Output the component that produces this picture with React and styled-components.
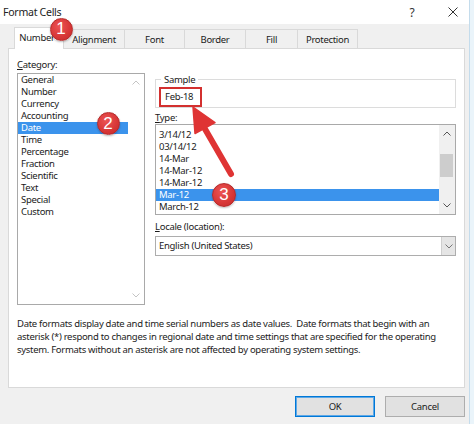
import styled, { createGlobalStyle } from "styled-components";

const GlobalStyle = createGlobalStyle`
  html, body {
    margin: 0;
    padding: 0;
    background: #eaf4fa;
  }
  * {
    box-sizing: border-box;
  }
`;

const Window = styled.div`
  position: relative;
  width: 470px;
  height: 424px;
  display: flex;
  flex-direction: column;
  background: #f0f0f0;
  border-right: 1px solid #c4dcec;
  font-family: "Noto Sans", "Liberation Sans", sans-serif;
  font-size: 9.5px;
  letter-spacing: -0.3px;
  color: #1b1b1b;
  overflow: hidden;
`;

const TitleBar = styled.div`
  height: 24px;
  flex: none;
  display: flex;
  align-items: center;
  padding-left: 3px;
  background: #fff;
`;

const Title = styled.div`
  flex: 1;
  font-size: 10.6px;
  color: #222;
`;

const TitleButton = styled.div`
  width: ${(p) => p.$w}px;
  height: 24px;
  margin-left: ${(p) => p.$gap || 0}px;
  display: flex;
  align-items: center;
  justify-content: center;
  font-size: 12px;
  color: #333;
`;

const Body = styled.div`
  flex: 1;
  display: flex;
  flex-direction: column;
  padding: 3px 4px 0 8px;
`;

const TabRow = styled.div`
  display: flex;
  align-items: flex-end;
  height: 22px;
  padding-left: 6px;
  margin-bottom: -1px;
  position: relative;
  z-index: 1;
`;

const Tab = styled.div`
  width: ${(p) => p.$w}px;
  height: ${(p) => (p.$active ? 22 : 19)}px;
  margin-bottom: ${(p) => (p.$active ? 0 : 1)}px;
  margin-left: -1px;
  display: flex;
  align-items: center;
  justify-content: center;
  padding-bottom: ${(p) => (p.$active ? 2 : 0)}px;
  padding-right: ${(p) => (p.$active ? 4 : 0)}px;
  background: ${(p) => (p.$active ? "#fff" : "#f0f0f0")};
  border: 1px solid #d9d9d9;
  border-bottom: none;
  position: relative;
  z-index: ${(p) => (p.$active ? 2 : 1)};
  &:first-child {
    margin-left: 0;
  }
`;

const Panel = styled.div`
  height: 340px;
  background: #fff;
  border: 1px solid #d9d9d9;
  padding: 9px 8px 0 8px;
  display: flex;
  flex-direction: column;
`;

const Columns = styled.div`
  display: grid;
  grid-template-columns: 128px 1fr;
  column-gap: 10px;
`;

const Column = styled.div`
  display: flex;
  flex-direction: column;
`;

const Label = styled.div`
  line-height: ${(p) => p.$lh || 12}px;
  margin-top: ${(p) => p.$mt || 0}px;
  margin-bottom: ${(p) => p.$mb || 0}px;
  white-space: nowrap;
`;

const ListBox = styled.div`
  height: ${(p) => p.$h}px;
  display: flex;
  border: 1px solid #a9a9a9;
  background: #fff;
`;

const Items = styled.div`
  flex: 1;
  padding-top: ${(p) => p.$pt || 0}px;
  overflow: hidden;
`;

const Item = styled.div`
  height: 12px;
  line-height: 12px;
  padding-left: 3px;
  white-space: nowrap;
  background: ${(p) => (p.$selected ? "#3b93ec" : "transparent")};
  color: ${(p) => (p.$selected ? "#fff" : "#1b1b1b")};
`;

const ScrollBar = styled.div`
  width: 16px;
  display: flex;
  flex-direction: column;
  background: ${(p) => (p.$enabled ? "#f0f0f0" : "#fff")};
`;

const ScrollArrow = styled.div`
  height: 17px;
  flex: none;
  display: flex;
  align-items: center;
  justify-content: center;
`;

const Track = styled.div`
  flex: 1;
`;

const Thumb = styled.div`
  height: 23px;
  margin: 12px 2px 0 1px;
  background: #cdcdcd;
`;

const Sample = styled.fieldset`
  margin: 15px 0 0 0;
  padding: 0 0 0 3px;
  border: 1px solid #dcdcdc;
  min-width: 0;
`;

const Legend = styled.legend`
  padding: 0 3px;
  margin-left: 2px;
  line-height: 13px;
`;

const SampleValue = styled.div`
  width: 43px;
  height: 20px;
  margin-top: 1px;
  padding-left: 4px;
  line-height: 16px;
  border: 2px solid #d3302f;
`;

const Combo = styled.div`
  height: 20px;
  margin-top: 3px;
  display: flex;
  border: 1px solid #adadad;
  background: #fff;
`;

const ComboText = styled.div`
  flex: 1;
  padding-left: 3px;
  line-height: 18px;
`;

const ComboButton = styled.div`
  width: 14px;
  display: flex;
  align-items: center;
  justify-content: center;
  background: #e5e5e5;
  border-left: 1px solid #cfcfcf;
`;

const Description = styled.p`
  margin: 12px 0 0 0;
  line-height: 13px;
  white-space: nowrap;
  color: #222;
`;

const Footer = styled.div`
  display: flex;
  justify-content: flex-end;
  gap: 10px;
  padding-top: 8px;
`;

const Button = styled.div`
  width: 80px;
  height: 21px;
  display: flex;
  align-items: center;
  justify-content: center;
  background: #e1e1e1;
  border: 1px solid ${(p) => (p.$default ? "#0078d7" : "#adadad")};
  box-shadow: ${(p) => (p.$default ? "inset 0 0 0 1px #5fa8e6" : "none")};
`;

const Badge = styled.div`
  position: absolute;
  left: ${(p) => p.$x - p.$d / 2}px;
  top: ${(p) => p.$y - p.$d / 2}px;
  width: ${(p) => p.$d}px;
  height: ${(p) => p.$d}px;
  border-radius: 50%;
  display: flex;
  align-items: center;
  justify-content: center;
  background: radial-gradient(circle at 40% 35%, #ec5454 0%, #d73636 60%, #c12a2a 100%);
  border: 1px solid #b52a2a;
  box-shadow: 0 1px 2px rgba(0, 0, 0, 0.25);
  color: #fff;
  font-family: "Liberation Sans", Arial, sans-serif;
  font-size: 17px;
  letter-spacing: 0;
  z-index: 5;
`;

const Overlay = styled.svg`
  position: absolute;
  left: 0;
  top: 0;
  pointer-events: none;
  z-index: 4;
`;

const Chevron = ({ up, color = "#555" }) => (
  <svg width="8" height="5" viewBox="0 0 8 5">
    <polyline
      points={up ? "0.5,4.5 4,1 7.5,4.5" : "0.5,0.5 4,4 7.5,0.5"}
      fill="none"
      stroke={color}
      strokeWidth="1"
    />
  </svg>
);

const categories = [
  "General",
  "Number",
  "Currency",
  "Accounting",
  "Date",
  "Time",
  "Percentage",
  "Fraction",
  "Scientific",
  "Text",
  "Special",
  "Custom",
];

const types = ["3/14/12", "03/14/12", "14-Mar", "14-Mar-12", "14-Mar-12", "Mar-12", "March-12"];

const tabs = [
  { name: "Number", w: 50 },
  { name: "Alignment", w: 62 },
  { name: "Font", w: 61 },
  { name: "Border", w: 62 },
  { name: "Fill", w: 53 },
  { name: "Protection", w: 61 },
];

export default function App() {
  return (
    <>
      <GlobalStyle />
      <Window>
        <TitleBar>
          <Title>Format Cells</Title>
          <TitleButton $w={30}>?</TitleButton>
          <TitleButton $w={32} $gap={10}>
            <svg width="10" height="10" viewBox="0 0 10 10">
              <path d="M0.5 0.5 L9.5 9.5 M9.5 0.5 L0.5 9.5" stroke="#333" strokeWidth="1" />
            </svg>
          </TitleButton>
        </TitleBar>

        <Body>
          <TabRow>
            {tabs.map((t, i) => (
              <Tab key={t.name} $w={t.w} $active={i === 0}>
                {t.name}
              </Tab>
            ))}
          </TabRow>

          <Panel>
            <Columns>
              <Column>
                <Label $lh={13} $mb={2}>
                  <u>C</u>ategory:
                </Label>
                <ListBox $h={232}>
                  <Items>
                    {categories.map((c) => (
                      <Item key={c} $selected={c === "Date"}>
                        {c}
                      </Item>
                    ))}
                  </Items>
                  <ScrollBar>
                    <ScrollArrow>
                      <Chevron up color="#c4c4c4" />
                    </ScrollArrow>
                    <Track />
                    <ScrollArrow>
                      <Chevron color="#c4c4c4" />
                    </ScrollArrow>
                  </ScrollBar>
                </ListBox>
              </Column>

              <Column>
                <Sample>
                  <Legend>Sample</Legend>
                  <SampleValue>Feb-18</SampleValue>
                </Sample>
                <Label $mt={4}>
                  <u>T</u>ype:
                </Label>
                <ListBox $h={91}>
                  <Items $pt={4}>
                    {types.map((t, i) => (
                      <Item key={i} $selected={t === "Mar-12"}>
                        {t}
                      </Item>
                    ))}
                  </Items>
                  <ScrollBar $enabled>
                    <ScrollArrow>
                      <Chevron up />
                    </ScrollArrow>
                    <Track>
                      <Thumb />
                    </Track>
                    <ScrollArrow>
                      <Chevron />
                    </ScrollArrow>
                  </ScrollBar>
                </ListBox>
                <Label $mt={6}>
                  <u>L</u>ocale (location):
                </Label>
                <Combo>
                  <ComboText>English (United States)</ComboText>
                  <ComboButton>
                    <Chevron color="#777" />
                  </ComboButton>
                </Combo>
              </Column>
            </Columns>

            <Description>
              Date formats display date and time serial numbers as date values.&nbsp; Date formats that begin with an
              <br />
              asterisk (*) respond to changes in regional date and time settings that are specified for the operating
              <br />
              system. Formats without an asterisk are not affected by operating system settings.
            </Description>
          </Panel>

          <Footer>
            <Button $default>OK</Button>
            <Button>Cancel</Button>
          </Footer>
        </Body>

        <Overlay width="470" height="424" viewBox="0 0 470 424">
          <line x1="231" y1="174" x2="205" y2="129" stroke="#df3434" strokeWidth="6" strokeLinecap="round" />
          <polygon points="193,107 215,122.5 195,133.5" fill="#df3434" stroke="#df3434" strokeWidth="1.5" strokeLinejoin="round" />
        </Overlay>

        <Badge $x={61} $y={29} $d={23}>1</Badge>
        <Badge $x={108} $y={123.5} $d={23}>2</Badge>
        <Badge $x={224} $y={195} $d={24}>3</Badge>
      </Window>
    </>
  );
}
